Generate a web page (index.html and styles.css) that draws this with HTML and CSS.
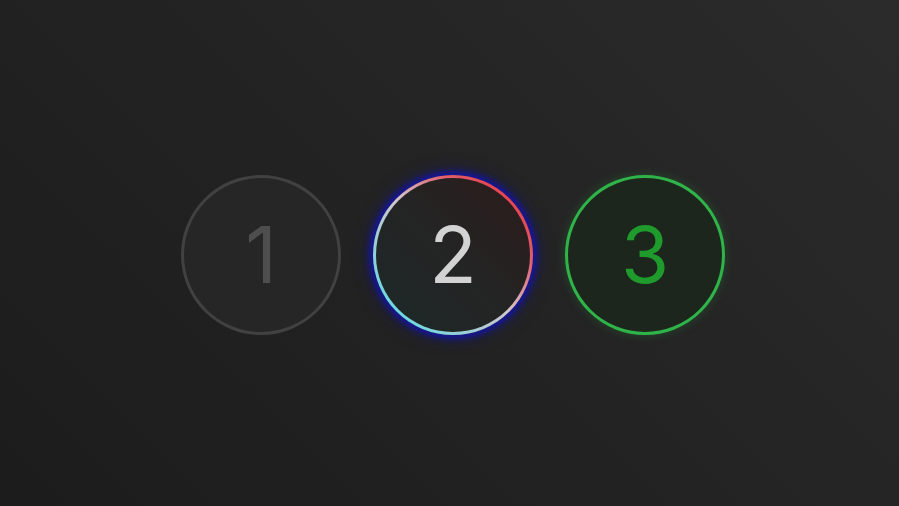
FILE: index.html
```html
<!DOCTYPE html>
<html>
<head>
<meta charset="utf-8">
<link rel="stylesheet" href="styles.css">
</head>
<body>
<main class="stage">
  <div class="steps">
    <div class="step step-idle"><span class="num">1</span></div>
    <div class="step step-active"><span class="num">2</span></div>
    <div class="step step-done"><span class="num">3</span></div>
  </div>
</main>
</body>
</html>
```
FILE: styles.css
```css
html, body {
  margin: 0;
  padding: 0;
  width: 100%;
  height: 100%;
}
body {
  background: linear-gradient(45deg, #1c1c1c 0%, #232323 50%, #2b2b2b 100%);
  font-family: "Inter", "Lato", sans-serif;
  overflow: hidden;
}
.stage {
  height: 506px;
  display: flex;
  align-items: center;
  justify-content: center;
  box-sizing: border-box;
  padding: 4px 0 0 7px;
}
.steps {
  display: flex;
  gap: 32px;
}
.step {
  width: 160px;
  height: 160px;
  box-sizing: border-box;
  border-radius: 50%;
  border: 3px solid transparent;
  display: flex;
  align-items: center;
  justify-content: center;
}
.num {
  font-size: 78px;
  font-weight: 400;
  line-height: 1;
  margin-top: -1px;
}
.step-idle {
  border-color: #414141;
  background: #262626;
}
.step-idle .num {
  color: #4e4e4e;
}
.step-active {
  background:
    linear-gradient(45deg, #1d2828 0%, #242424 50%, #2c1b1b 100%) padding-box,
    linear-gradient(45deg, #3ee6ee 0%, #8fd0d8 25%, #d2c6cc 50%, #e06070 72%, #f0262e 100%) border-box;
  box-shadow: 0 0 6px 3px #1414a8, 0 0 16px 4px rgba(20, 20, 140, 0.5);
}
.step-active .num {
  color: #d3d3d3;
}
.step-done {
  border-color: #2fb44a;
  background: #1d261d;
  box-shadow: 0 0 10px 1px rgba(40, 160, 60, 0.25);
}
.step-done .num {
  color: #1f9a2c;
}
```
